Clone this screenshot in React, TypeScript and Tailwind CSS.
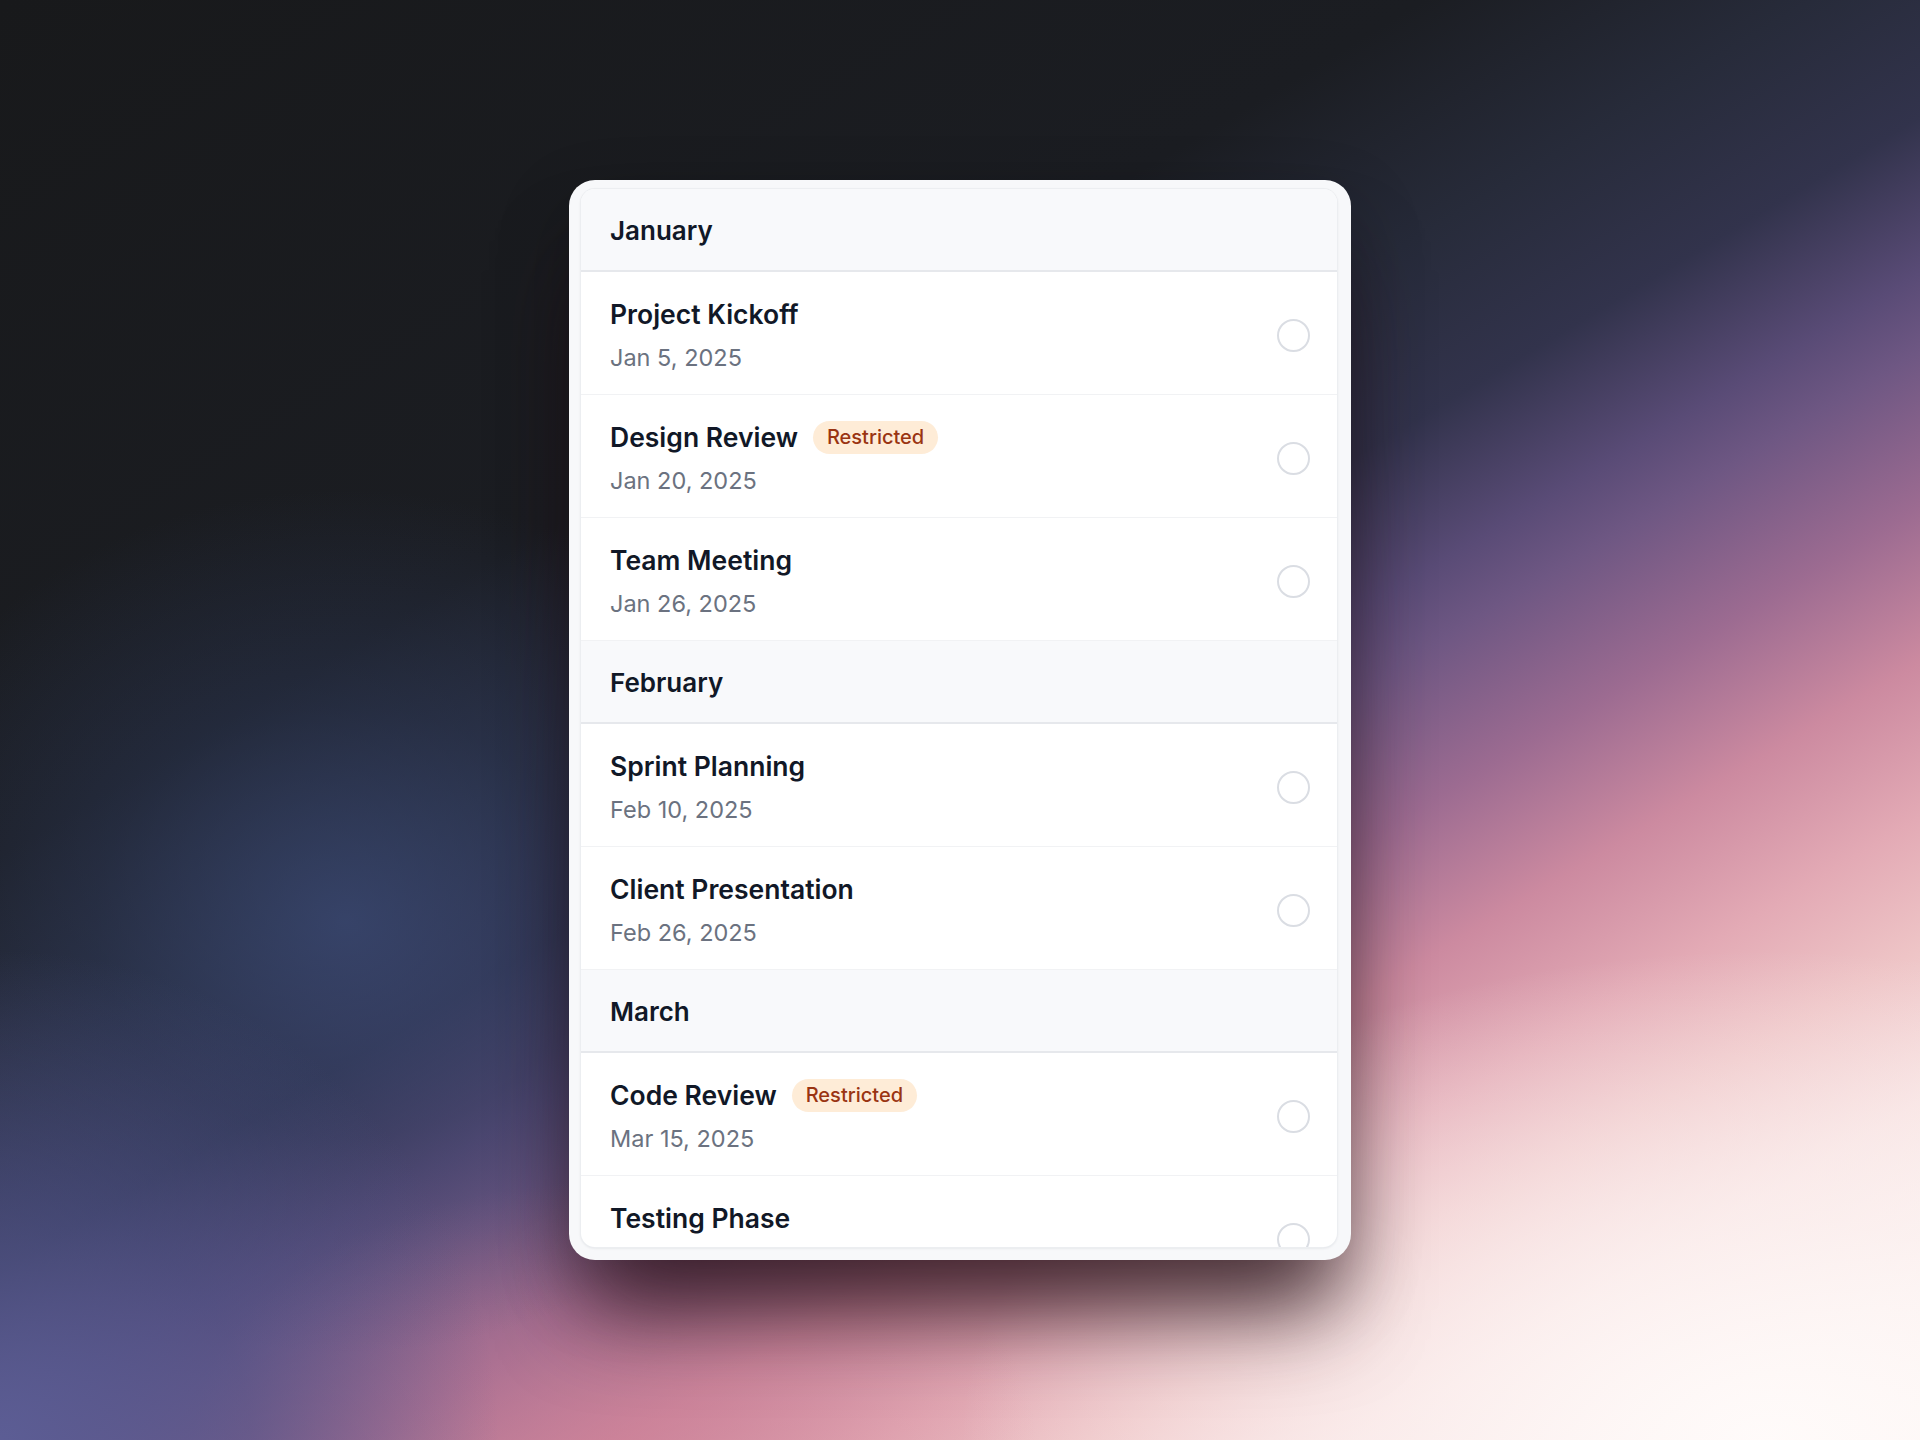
type Entry = {
  title: string;
  date: string;
  restricted?: boolean;
};

type Group = {
  month: string;
  entries: Entry[];
};

const GROUPS: Group[] = [
  {
    month: "January",
    entries: [
      { title: "Project Kickoff", date: "Jan 5, 2025" },
      { title: "Design Review", date: "Jan 20, 2025", restricted: true },
      { title: "Team Meeting", date: "Jan 26, 2025" },
    ],
  },
  {
    month: "February",
    entries: [
      { title: "Sprint Planning", date: "Feb 10, 2025" },
      { title: "Client Presentation", date: "Feb 26, 2025" },
    ],
  },
  {
    month: "March",
    entries: [
      { title: "Code Review", date: "Mar 15, 2025", restricted: true },
      { title: "Testing Phase", date: "Mar 28, 2025" },
    ],
  },
];

function Radio() {
  return (
    <span
      role="radio"
      aria-checked="false"
      className="block h-[33px] w-[33px] shrink-0 rounded-full border-2 border-[#dadde3] bg-white"
    />
  );
}

function Row({ entry }: { entry: Entry }) {
  return (
    <li className="flex items-center justify-between border-b border-[#f1f2f4] pl-[29px] pr-[27px] pt-[22px] pb-[18px]">
      <div className="flex flex-col">
        <div className="flex items-center gap-[15px]">
          <span className="text-[26.5px] leading-[40px] font-semibold text-[#111827]">
            {entry.title}
          </span>
          {entry.restricted && (
            <span className="rounded-full bg-[#feecd7] px-[14px] text-[20px] leading-[33px] font-medium text-[#9a3412]">
              Restricted
            </span>
          )}
        </div>
        <span className="mt-[6px] text-[23.5px] leading-[36px] text-[#6b7280]">{entry.date}</span>
      </div>
      <Radio />
    </li>
  );
}

export default function App() {
  return (
    <div className="flex min-h-[1440px] w-full justify-center bg-[#18191b] bg-[radial-gradient(ellipse_42%_34%_at_92%_100%,rgba(255,251,250,0.95)_0%,rgba(252,242,241,0.7)_45%,rgba(248,228,228,0)_100%),radial-gradient(ellipse_26%_34%_at_0%_100%,rgba(92,94,150,0.95)_0%,rgba(80,84,138,0.6)_50%,rgba(60,70,120,0)_100%),radial-gradient(ellipse_26%_30%_at_18%_64%,rgba(60,76,122,0.7)_0%,rgba(48,62,100,0.4)_50%,rgba(40,50,80,0)_100%),radial-gradient(ellipse_22%_18%_at_32%_100%,rgba(205,125,148,0.55)_0%,rgba(205,125,148,0)_100%),linear-gradient(149deg,#18191b_0%,#1b1d22_33%,#272b3a_42%,#32334c_49%,#594b76_55%,#6e5783_58%,#9c6b91_64%,#cc8aa0_70%,#e3aab5_76%,#eec4c6_81%,#f7e0e0_87%,#fcf3f2_94%,#fefcfb_100%)] pt-[180px] font-[family-name:Inter,'Noto_Sans',sans-serif]">
      <div className="h-[1080px] w-[782px] rounded-[26px] bg-[#f7f8fa] pl-3 pr-[14px] pt-[9px] pb-[13px] shadow-[0_70px_90px_-20px_rgba(35,14,22,0.75),0_30px_70px_rgba(0,0,0,0.25)]">
        <div className="h-[1058px] overflow-hidden rounded-[14px] bg-white shadow-[0_1px_3px_rgba(15,23,42,0.12)] ring-1 ring-[#eceef1]">
          {GROUPS.map((group) => (
            <section key={group.month}>
              <h2 className="border-b-2 border-[#e6e8ec] bg-[#f8f9fb] pl-[29px] pt-[24px] pb-[21px] text-[26px] leading-[36px] font-semibold text-[#111827]">
                {group.month}
              </h2>
              <ul>
                {group.entries.map((entry) => (
                  <Row key={entry.title} entry={entry} />
                ))}
              </ul>
            </section>
          ))}
        </div>
      </div>
    </div>
  );
}
